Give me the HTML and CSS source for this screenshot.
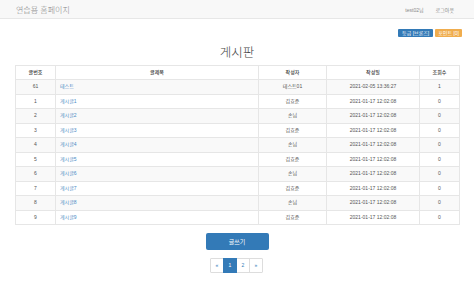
FILE: index.html
```html
<!DOCTYPE html>
<html>
<head>
    <title>게시판</title>
    <link rel="stylesheet" href="styles.css">
</head>
<body>
    <div class="navbar">
        <a class="brand" href="#">연습용 홈페이지</a>
        <div class="nav-right">
            <a href="#">test02님</a>
            <a href="#">로그아웃</a>
        </div>
    </div>

    <div class="container">
        <div class="info">
            <span class="badge grade">등급 [브론즈]</span>
            <span class="badge point">포인트 [0]</span>
        </div>

        <h2 class="title">게시판</h2>

        <table class="board">
            <colgroup>
                <col style="width:40px">
                <col style="width:203px">
                <col style="width:68px">
                <col style="width:93px">
                <col style="width:40px">
            </colgroup>
            <thead>
                <tr>
                    <th>글번호</th>
                    <th>글제목</th>
                    <th>작성자</th>
                    <th>작성일</th>
                    <th>조회수</th>
                </tr>
            </thead>
            <tbody>
                <tr><td>61</td><td class="subject"><a href="#">테스트</a></td><td>테스트01</td><td>2021-02-05 13:36:27</td><td>1</td></tr>
                <tr><td>1</td><td class="subject"><a href="#">게시글1</a></td><td>김효준</td><td>2021-01-17 12:02:08</td><td>0</td></tr>
                <tr><td>2</td><td class="subject"><a href="#">게시글2</a></td><td>손님</td><td>2021-01-17 12:02:08</td><td>0</td></tr>
                <tr><td>3</td><td class="subject"><a href="#">게시글3</a></td><td>김효준</td><td>2021-01-17 12:02:08</td><td>0</td></tr>
                <tr><td>4</td><td class="subject"><a href="#">게시글4</a></td><td>손님</td><td>2021-01-17 12:02:08</td><td>0</td></tr>
                <tr><td>5</td><td class="subject"><a href="#">게시글5</a></td><td>김효준</td><td>2021-01-17 12:02:08</td><td>0</td></tr>
                <tr><td>6</td><td class="subject"><a href="#">게시글6</a></td><td>손님</td><td>2021-01-17 12:02:08</td><td>0</td></tr>
                <tr><td>7</td><td class="subject"><a href="#">게시글7</a></td><td>김효준</td><td>2021-01-17 12:02:08</td><td>0</td></tr>
                <tr><td>8</td><td class="subject"><a href="#">게시글8</a></td><td>손님</td><td>2021-01-17 12:02:08</td><td>0</td></tr>
                <tr><td>9</td><td class="subject"><a href="#">게시글9</a></td><td>김효준</td><td>2021-01-17 12:02:08</td><td>0</td></tr>
            </tbody>
        </table>

        <div class="actions">
            <button class="write">글쓰기</button>
        </div>

        <ul class="pagination">
            <li><a href="#">&laquo;</a></li>
            <li class="active"><a href="#">1</a></li>
            <li><a href="#">2</a></li>
            <li><a href="#">&raquo;</a></li>
        </ul>
    </div>
</body>
</html>
```

FILE: styles.css
```css
body { margin: 0; font-family: "Liberation Sans", "Noto Sans CJK KR", sans-serif; color: #555; background: #fff; }
a { text-decoration: none; }

.navbar { height: 18px; background-color: #f8f8f8; border-bottom: 1px solid #e7e7e7; display: flex; align-items: center; justify-content: space-between; padding: 0 20px 0 16px; }
.brand { font-size: 8px; color: #888; font-weight: 300; }
.nav-right { display: flex; gap: 12px; }
.nav-right a { font-size: 5px; color: #888; }

.container { padding: 0 15px; }

.info { display: flex; justify-content: flex-end; gap: 2px; margin-top: 10px; margin-right: -3px; }
.badge { height: 8px; line-height: 8px; font-size: 5px; color: #fff; padding: 0 3px; border-radius: 1px; }
.grade { background-color: #337ab7; padding: 0 4px; }
.point { background-color: #f0ad4e; }

.title { margin: 9px 0 0; font-size: 12.5px; line-height: 14px; font-weight: 300; text-align: center; color: #444; }

.board { width: 100%; border-collapse: collapse; table-layout: fixed; margin-top: 5px; font-size: 5px; }
.board th, .board td { border: 1px solid #e6e6e6; text-align: center; padding: 3px 4px; line-height: 7.5px; white-space: nowrap; }
.board th { line-height: 7px; font-weight: 500; color: #444; }
.board tbody tr:nth-child(odd) { background-color: #f9f9f9; }
.board td.subject { text-align: left; }
.board td.subject a { color: #4a8ac4; }

.actions { display: flex; justify-content: center; margin-top: 8px; }
.write { width: 63px; height: 17px; background-color: #337ab7; color: #fff; border: none; border-radius: 2px; font-family: inherit; font-size: 6px; padding: 0; cursor: pointer; }

.pagination { list-style: none; display: flex; justify-content: center; margin: 8px 0 0; padding: 0; }
.pagination li a { display: block; width: 12px; height: 13px; line-height: 13px; text-align: center; font-size: 5px; color: #337ab7; border: 1px solid #ddd; margin-left: -1px; }
.pagination li:first-child a { border-radius: 1px 0 0 1px; }
.pagination li:last-child a { border-radius: 0 1px 1px 0; }
.pagination li.active a { background-color: #337ab7; border-color: #337ab7; color: #fff; position: relative; }
```
